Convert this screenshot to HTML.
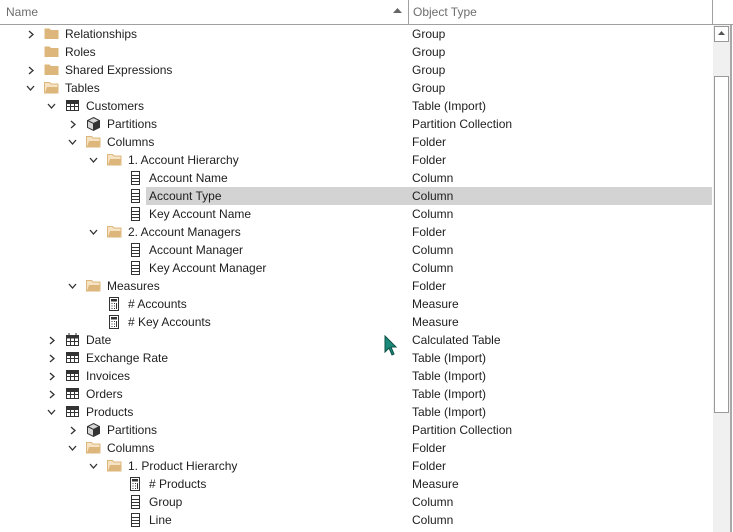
<!DOCTYPE html>
<html><head><meta charset="utf-8"><style>
*{margin:0;padding:0;box-sizing:border-box}
body{width:733px;height:532px;background:#fff;font-family:"Liberation Sans",sans-serif;font-size:12px;color:#1e1e1e;position:relative;overflow:hidden}
.hdr{position:absolute;left:0;top:0;width:733px;height:25px;background:#fff;border-bottom:1px solid #a0a0a0}
.hdr span{position:absolute;top:5px;color:#6d6d6d;font-size:12px}
.vl{position:absolute;top:0;width:1px;height:24px;background:#a0a0a0}
.row{position:absolute;left:0;width:712px;height:18px}
.row .t{position:absolute;top:2px;white-space:nowrap}
.row .ty{position:absolute;left:412px;top:2px}
.row svg{position:absolute}
.sel{position:absolute;left:146px;top:187px;width:566px;height:18px;background:#d3d3d3}
</style></head><body>
<div class="hdr"><span style="left:6px">Name</span><span style="left:413px">Object Type</span>
<div class="vl" style="left:408px"></div><div class="vl" style="left:712px"></div>
<svg style="position:absolute;left:393px;top:8px" width="9" height="6"><path d="M0 5 L4.5 0 L9 5Z" fill="#666"/></svg></div>
<div class="sel"></div>
<div style="position:absolute;left:713px;top:25px;width:17px;height:507px;background:#f0f0f0"></div>
<div style="position:absolute;left:730px;top:25px;width:2px;height:507px;background:#a8a8a8"></div>
<div style="position:absolute;left:714px;top:26px;width:15px;height:16px;border:1px solid #999;background:#fff"></div>
<svg style="position:absolute;left:718px;top:31px" width="7" height="5"><path d="M0 4 L3.5 0 L7 4Z" fill="#555"/></svg>
<div style="position:absolute;left:714px;top:76px;width:15px;height:337px;border:1px solid #999;background:#fff"></div>
<div id="tree"></div>
<svg style="position:absolute;left:384px;top:335px" width="14" height="22"><path d="M1 1 L1 17 L5 13 L8 20 L10 19 L7 12 L12 12 Z" fill="#1a8a7a" stroke="#0c4f45" stroke-width="1"/></svg>
<script>
const rows=[[0,'>','f','Relationships','Group'],[0,'','f','Roles','Group'],[0,'>','f','Shared Expressions','Group'],[0,'v','o','Tables','Group'],
[1,'v','t','Customers','Table (Import)'],[2,'>','p','Partitions','Partition Collection'],[2,'v','o','Columns','Folder'],[3,'v','o','1. Account Hierarchy','Folder'],
[4,'','c','Account Name','Column'],[4,'','c','Account Type','Column'],[4,'','c','Key Account Name','Column'],[3,'v','o','2. Account Managers','Folder'],
[4,'','c','Account Manager','Column'],[4,'','c','Key Account Manager','Column'],[2,'v','o','Measures','Folder'],[3,'','m','# Accounts','Measure'],[3,'','m','# Key Accounts','Measure'],
[1,'>','d','Date','Calculated Table'],[1,'>','t','Exchange Rate','Table (Import)'],[1,'>','t','Invoices','Table (Import)'],[1,'>','t','Orders','Table (Import)'],
[1,'v','t','Products','Table (Import)'],[2,'>','p','Partitions','Partition Collection'],[2,'v','o','Columns','Folder'],[3,'v','o','1. Product Hierarchy','Folder'],
[4,'','m','# Products','Measure'],[4,'','c','Group','Column'],[4,'','c','Line','Column']];
const ic={
f:'<path d="M0.5 2.5h5l1.5 1.5h7.5v9h-14z" fill="#dcb67a"/>',
o:'<path d="M0.5 2.5h5l1.5 1.5h7v9h-13.5z" fill="#f5e3c3" stroke="#dcb67a"/><path d="M3 7h11l-1 6H1z" fill="#dcb67a"/>',
t:'<rect x="1.5" y="2.5" width="12" height="10" fill="#fff" stroke="#333"/><path d="M1.5 5.5h12M1.5 8.5h12M5.5 5.5v7M9.5 5.5v7" stroke="#333"/><rect x="1.5" y="2.5" width="12" height="3" fill="#333"/>',
d:'<rect x="1.5" y="3.5" width="12" height="10" fill="#fff" stroke="#333"/><rect x="1.5" y="3.5" width="12" height="3" fill="#333"/><path d="M1.5 9.5h12M5.5 6.5v7M9.5 6.5v7" stroke="#333"/><path d="M4 1v3M11 1v3" stroke="#333"/>',
c:'<rect x="3.5" y="1.5" width="8" height="13" fill="#fff" stroke="#333"/><path d="M3.5 5.5h8M3.5 8.5h8M3.5 11.5h8" stroke="#333"/>',
m:'<rect x="2.5" y="1.5" width="9" height="13" fill="#fff" stroke="#333"/><rect x="4" y="3" width="6" height="2.5" fill="#333"/><path d="M4.5 7.5h1M7 7.5h1M9.5 7.5h0M4.5 10h1M7 10h1M4.5 12.5h1M7 12.5h1" stroke="#333"/><path d="M9.5 7v6" stroke="#333"/>',
p:'<path d="M7.5 1.5l6 3v7l-6 3l-6-3v-7z" fill="#d8d8d8" stroke="#333"/><path d="M1.5 4.5l6 3l6-3M7.5 7.5v7" stroke="#333" fill="none"/><path d="M7.5 7.5l6-3v7l-6 3z" fill="#333"/>'};
let h='';
rows.forEach((r,i)=>{const [l,e,k,n,t]=r;const x=21*l;const top=25+18*i;
h+=`<div class="row" style="top:${top}px">`;
if(e=='>')h+=`<svg style="left:${x+27}px;top:5px" width="8" height="9"><path d="M2 1l4 3.5l-4 3.5" stroke="#333" stroke-width="1.3" fill="none"/></svg>`;
if(e=='v')h+=`<svg style="left:${x+26}px;top:5px" width="9" height="8"><path d="M1 2l3.5 4l3.5-4" stroke="#333" stroke-width="1.3" fill="none"/></svg>`;
h+=`<svg style="left:${x+44}px;top:1px" width="16" height="16">${ic[k]}</svg>`;
h+=`<span class="t" style="left:${x+65}px">${n}</span><span class="ty">${t}</span></div>`;});
document.getElementById('tree').innerHTML=h;
</script>
</body></html>
